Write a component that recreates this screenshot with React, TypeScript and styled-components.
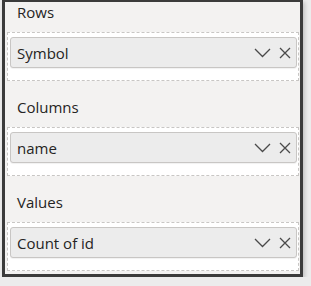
import React from "react";
import styled, { createGlobalStyle } from "styled-components";

const Global = createGlobalStyle`
  html, body { margin: 0; padding: 0; background: #ececec; }
  body { font-family: "Open Sans", "Noto Sans", sans-serif; }
`;

const Frame = styled.div`
  box-sizing: border-box;
  margin-left: 2px;
  width: 301px;
  height: 277px;
  border: 3px solid #3b3b3b;
  border-top-width: 2px;
  background: #f3f2f1;
  box-shadow: 2px 2px 4px rgba(0, 0, 0, 0.18);
  padding: 0 1px 0 2px;
  display: flex;
  flex-direction: column;
  gap: 16px;
  overflow: hidden;
`;

const Section = styled.div`
  display: flex;
  flex-direction: column;
  gap: 10px;
`;

const Label = styled.div`
  height: 20px;
  line-height: 20px;
  padding-left: 10px;
  font-size: 15px;
  color: #252423;
`;

const Zone = styled.div`
  box-sizing: border-box;
  height: 49px;
  border: 1px dashed #c8c6c4;
  background: #ffffff;
  padding: 4px 1px 0 2px;
`;

const Pill = styled.div`
  box-sizing: border-box;
  height: 31px;
  border: 1px solid #c8c6c4;
  border-radius: 3px;
  background: #ececec;
  display: flex;
  align-items: center;
  padding: 0 5px 0 6px;
  font-size: 15px;
  color: #252423;
  box-shadow: 0 1px 1px rgba(0, 0, 0, 0.06);
`;

const Name = styled.span`
  flex: 1;
  white-space: nowrap;
`;

const Icons = styled.div`
  display: flex;
  align-items: center;
  gap: 8px;
`;

const Chevron = () => (
  <svg width="17" height="10" viewBox="0 0 17 10">
    <path d="M1 1 L8.5 8.5 L16 1" fill="none" stroke="#4a4a4a" strokeWidth="1.3" />
  </svg>
);

const Close = () => (
  <svg width="12" height="12" viewBox="0 0 12 12">
    <path d="M1 1 L11 11 M11 1 L1 11" fill="none" stroke="#4a4a4a" strokeWidth="1.3" />
  </svg>
);

const wells = [
  { label: "Rows", field: "Symbol" },
  { label: "Columns", field: "name" },
  { label: "Values", field: "Count of id" },
];

export default function App() {
  return (
    <>
      <Global />
      <Frame>
        {wells.map((w) => (
          <Section key={w.label}>
            <Label>{w.label}</Label>
            <Zone>
              <Pill>
                <Name>{w.field}</Name>
                <Icons>
                  <Chevron />
                  <Close />
                </Icons>
              </Pill>
            </Zone>
          </Section>
        ))}
      </Frame>
    </>
  );
}
